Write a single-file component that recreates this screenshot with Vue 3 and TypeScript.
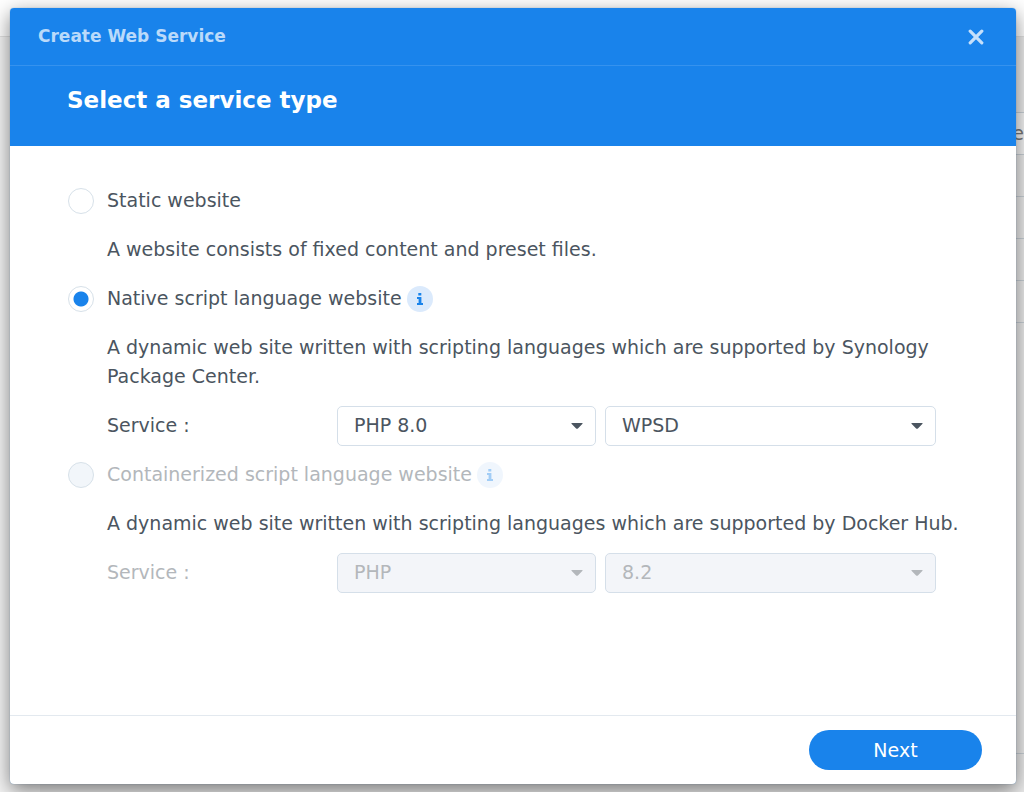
<script setup lang="ts">
import { ref } from 'vue'

interface Picker {
  id: string
  label: string
  value: string
}

interface ServiceType {
  id: string
  label: string
  description: string
  info: boolean
  disabled: boolean
  pickers: Picker[]
}

const selected = ref('native')

const serviceTypes: ServiceType[] = [
  {
    id: 'static',
    label: 'Static website',
    description: 'A website consists of fixed content and preset files.',
    info: false,
    disabled: false,
    pickers: [],
  },
  {
    id: 'native',
    label: 'Native script language website',
    description:
      'A dynamic web site written with scripting languages which are supported by Synology Package Center.',
    info: true,
    disabled: false,
    pickers: [
      { id: 'native-service', label: 'Service', value: 'PHP 8.0' },
      { id: 'native-profile', label: 'Profile', value: 'WPSD' },
    ],
  },
  {
    id: 'container',
    label: 'Containerized script language website',
    description:
      'A dynamic web site written with scripting languages which are supported by Docker Hub.',
    info: true,
    disabled: true,
    pickers: [
      { id: 'container-service', label: 'Service', value: 'PHP' },
      { id: 'container-version', label: 'Version', value: '8.2' },
    ],
  },
]
</script>

<template>
  <div class="page">
    <div class="backdrop" aria-hidden="true">
      <div class="bar"></div>
      <div class="pane">
        <div class="tools"></div>
        <div class="line head">e</div>
        <div v-for="n in 4" :key="n" class="line"></div>
        <div class="rest"></div>
        <div class="status"></div>
      </div>
    </div>

    <section class="dialog" role="dialog" aria-labelledby="dialog-title">
      <header class="titlebar">
        <h1 id="dialog-title">Create Web Service</h1>
        <button class="close" type="button" aria-label="Close">
          <svg width="16" height="16" viewBox="0 0 16 16">
            <path d="M2.2 2.2 L13.8 13.8 M13.8 2.2 L2.2 13.8" fill="none" stroke="currentColor" stroke-width="3.2" stroke-linecap="round" />
          </svg>
        </button>
      </header>
      <div class="step">
        <h2>Select a service type</h2>
      </div>

      <form id="service-form" class="content" @submit.prevent>
        <div v-for="type in serviceTypes" :key="type.id" class="option" :class="{ disabled: type.disabled }">
          <div class="row">
            <input :id="type.id" v-model="selected" type="radio" name="service-type" :value="type.id" :disabled="type.disabled" />
            <label :for="type.id" class="name">{{ type.label }}</label>
            <button v-if="type.info" class="info" type="button" aria-label="More information" :disabled="type.disabled">
              <svg width="26" height="26" viewBox="0 0 26 26">
                <circle cx="13" cy="13" r="13" fill="#dbeafc" />
                <path d="M11.3 7h3v2.6h-3z M10 11h4.4v6h1.6v2h-6v-2h1.6v-4h-1.6z" fill="#1983eb" />
              </svg>
            </button>
          </div>
          <p class="description">{{ type.description }}</p>
          <div v-if="type.pickers.length" class="fields">
            <label class="field-label" :for="type.pickers[0].id">Service :</label>
            <div v-for="picker in type.pickers" :key="picker.id" class="picker">
              <select :id="picker.id" :aria-label="picker.label" :disabled="type.disabled">
                <option>{{ picker.value }}</option>
              </select>
              <svg class="arrow" width="12" height="6" viewBox="0 0 12 6">
                <path d="M1 0h10q1 0 .5 .8l-4.6 4.6q-.9 .9-1.8 0l-4.6-4.6q-.5-.8 .5-.8z" fill="currentColor" />
              </svg>
            </div>
          </div>
        </div>
      </form>

      <footer class="footer">
        <button class="next" type="submit" form="service-form">Next</button>
      </footer>
    </section>
  </div>
</template>

<style>
body {
  margin: 0;
}
</style>

<style scoped>
* {
  box-sizing: border-box;
}

.page {
  position: relative;
  display: flex;
  min-height: 100vh;
  padding: 8px 8px 8px 10px;
  overflow: hidden;
  font-family: Verdana, 'DejaVu Sans', sans-serif;
  font-size: 19px;
  line-height: 29px;
  color: #4b5560;
}

.backdrop {
  position: absolute;
  inset: 0;
  display: flex;
  flex-direction: column;
  background: #f4f4f4;
  color: #777;
}

.bar {
  height: 37px;
  background: #fff;
  border-bottom: 1px solid #e2e2e2;
}

.pane {
  display: flex;
  flex: 1;
  flex-direction: column;
  margin-left: 40px;
  background: #ececec;
}

.tools {
  height: 76px;
  border-bottom: 1px solid #c8d0d6;
}

.line {
  height: 42px;
  border-bottom: 1px solid #c8d0d6;
}

.head {
  padding-top: 6px;
  background: #f4f4f4;
  text-align: right;
}

.rest {
  flex: 1;
  border-bottom: 1px solid #c8d0d6;
}

.status {
  height: 38px;
}

.dialog {
  position: relative;
  display: flex;
  flex: 1;
  flex-direction: column;
  min-width: 0;
  border-radius: 4px;
  overflow: hidden;
  background: #fff;
  box-shadow: 0 6px 20px rgba(0, 0, 0, 0.5), 0 0 1px #5b9bd8;
}

.titlebar {
  display: flex;
  align-items: center;
  justify-content: space-between;
  height: 58px;
  padding: 0 28px;
  border-bottom: 1px solid #3592ee;
  background: #1983eb;
  color: #badafa;
}

h1,
h2,
p {
  margin: 0;
}

h1 {
  font-size: 17px;
  line-height: 29px;
}

button {
  padding: 0;
  border: 0;
  font: inherit;
  cursor: pointer;
}

.close {
  display: grid;
  place-items: center;
  width: 24px;
  height: 24px;
  background: none;
  color: #c5e0fb;
}

.step {
  display: flex;
  align-items: center;
  height: 80px;
  padding: 0 57px 12px;
  background: #1983eb;
  color: #fff;
}

h2 {
  font-size: 23px;
  line-height: 29px;
}

.content {
  flex: 1;
  padding: 30px 34px 30px 58px;
}

.row {
  display: flex;
  align-items: center;
  height: 49px;
}

input[type='radio'] {
  appearance: none;
  width: 26px;
  height: 26px;
  margin: 0 13px 0 0;
  border: 1px solid #d7e1e9;
  border-radius: 50%;
  background: #fff;
}

input[type='radio']:checked {
  background: radial-gradient(circle, #1983eb 7px, #fff 8px);
}

input[type='radio']:disabled {
  background: #f2f6fa;
}

.info {
  width: 26px;
  height: 26px;
  margin-left: 5px;
  background: none;
}

.info svg,
.close svg {
  display: block;
}

.info:disabled {
  opacity: 0.4;
}

.description {
  padding: 10px 0 10px 39px;
}

.fields {
  display: grid;
  grid-template-columns: 221px 259px minmax(0, 331px);
  gap: 9px;
  align-items: center;
  height: 49px;
  padding-left: 39px;
}

.picker {
  position: relative;
}

select {
  appearance: none;
  display: block;
  width: 100%;
  height: 40px;
  padding: 0 40px 0 16px;
  border: 1px solid #d5dfe9;
  border-radius: 5px;
  background: #fff;
  color: inherit;
  font: inherit;
  opacity: 1;
}

select:disabled {
  background: #f3f5f9;
}

.arrow {
  position: absolute;
  top: 17px;
  right: 13px;
  pointer-events: none;
}

.disabled .name,
.disabled .fields {
  color: #b3b7bb;
}

.footer {
  display: flex;
  align-items: center;
  justify-content: flex-end;
  height: 69px;
  padding: 0 34px;
  border-top: 1px solid #e3e9ef;
}

.next {
  width: 173px;
  height: 40px;
  border-radius: 20px;
  background: #1983eb;
  color: #fff;
}
</style>
